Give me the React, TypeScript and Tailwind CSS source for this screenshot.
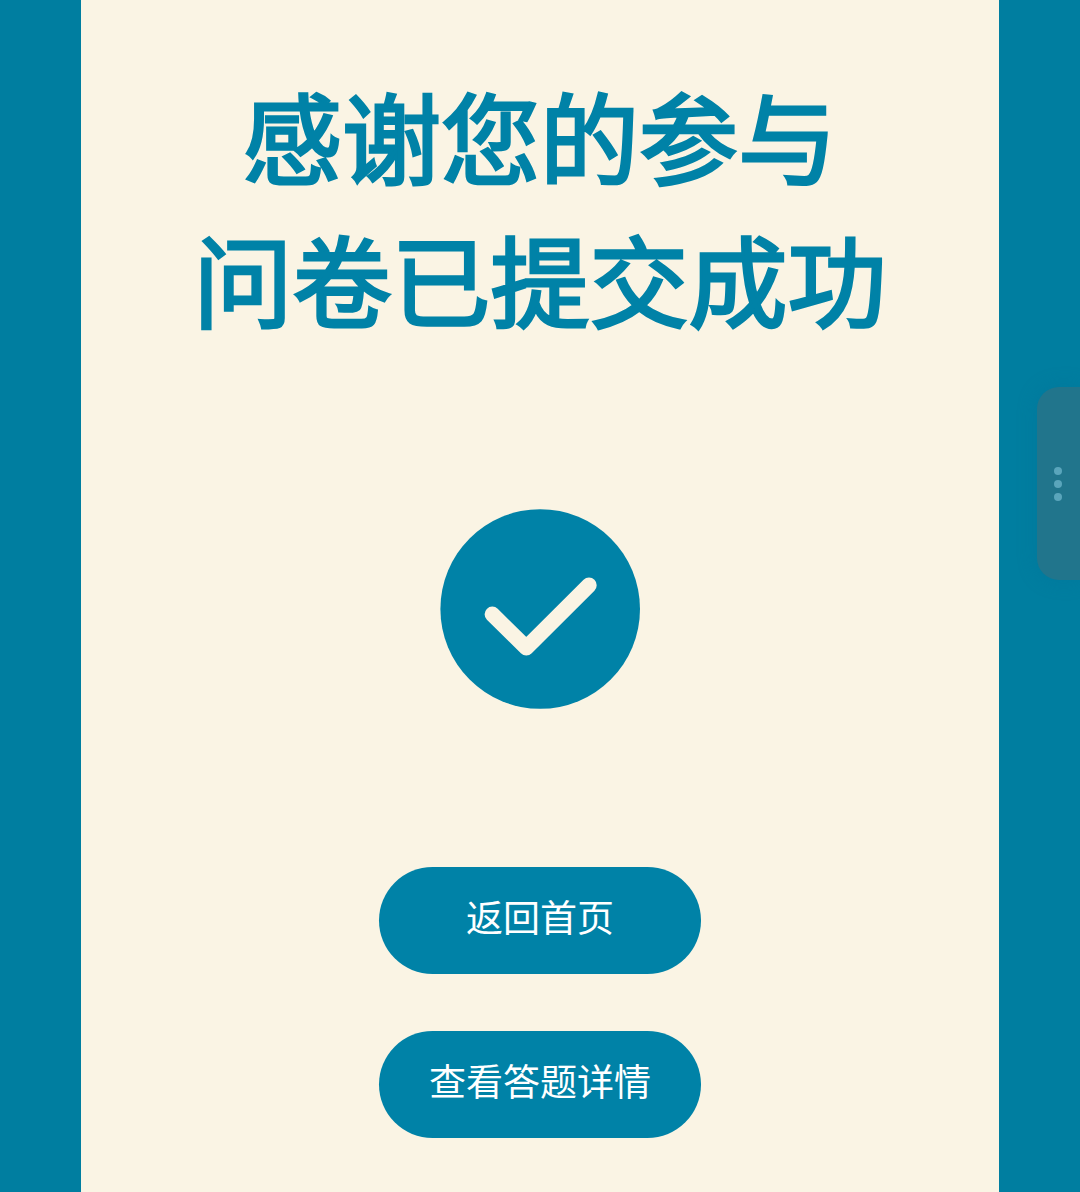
export default function App() {

  return <div className="relative bg-[#007ea0] min-h-screen w-full flex justify-center items-stretch overflow-hidden font-['Noto_Sans_CJK_SC',sans-serif]">
    <main className="bg-[#faf4e4] w-[85%] flex flex-col items-center pt-[63px] pb-[54px]">
      <h1 className="text-[#0082a7] text-[99px] leading-[143px] font-normal text-center [-webkit-text-stroke:3px_#0082a7]">
        感谢您的参与<br />问卷已提交成功
      </h1>
      <svg className="mt-40 size-[200px]" viewBox="0 0 200 200" fill="none" aria-hidden="true">
        <circle cx="100.2" cy="100" r="99.8" fill="#0082a7" />
        <path d="M52.3 105.3L86.3 138.8L149 76.3" stroke="#faf4e4" strokeWidth="15.4" strokeLinecap="round" strokeLinejoin="round" />
      </svg>
      <div className="mt-[158px] flex flex-col gap-[57px]">
        <button className="bg-[#0082a7] text-white text-[37px] w-[322px] h-[107px] pb-2 rounded-full">返回首页</button>
        <button className="bg-[#0082a7] text-white text-[37px] w-[322px] h-[107px] pb-2 rounded-full">查看答题详情</button>
      </div>
    </main>
    <button aria-label="更多" className="absolute right-0 top-[387px] w-[43px] h-[193px] pr-0.5 rounded-l-[22px] bg-[#21758c] shadow-[0_0_20px_rgba(0,110,150,0.3)] flex flex-col justify-center items-center gap-[5px]">
      <span className="size-2 rounded-full bg-[#5aa5bb]" />
      <span className="size-2 rounded-full bg-[#5aa5bb]" />
      <span className="size-2 rounded-full bg-[#5aa5bb]" />
    </button>
  </div>
}
